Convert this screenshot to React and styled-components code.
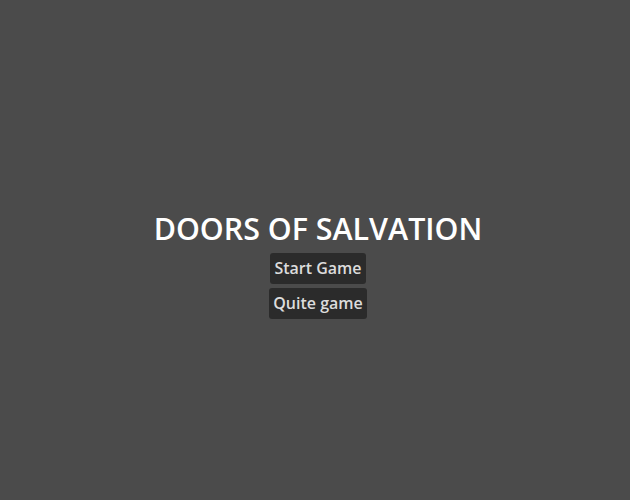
import React from "react";
import styled, { createGlobalStyle } from "styled-components";

const Global = createGlobalStyle`
  html, body { margin: 0; padding: 0; background: #4b4b4b; }
  body { font-family: "Open Sans", "Noto Sans", sans-serif; }
`;

const Screen = styled.div`
  height: 500px;
  display: flex;
  flex-direction: column;
  align-items: center;
  justify-content: center;
  padding: 27px 0 0 6px;
  box-sizing: border-box;
`;

const Title = styled.h1`
  margin: 0 0 4px;
  font-size: 30.4px;
  font-weight: 600;
  color: #ffffff;
  line-height: 40px;
`;

const Menu = styled.div`
  display: flex;
  flex-direction: column;
  align-items: center;
  gap: 4px;
`;

const MenuButton = styled.button`
  font-family: inherit;
  font-size: 16px;
  font-weight: 600;
  color: #dcdcdc;
  background: #2b2b2b;
  border: none;
  border-radius: 3px;
  padding: 0 4px;
  height: 31px;
  cursor: pointer;
`;

export default function App() {
  return (
    <>
      <Global />
      <Screen>
        <Title>DOORS OF SALVATION</Title>
        <Menu>
          <MenuButton>Start Game</MenuButton>
          <MenuButton>Quite game</MenuButton>
        </Menu>
      </Screen>
    </>
  );
}
